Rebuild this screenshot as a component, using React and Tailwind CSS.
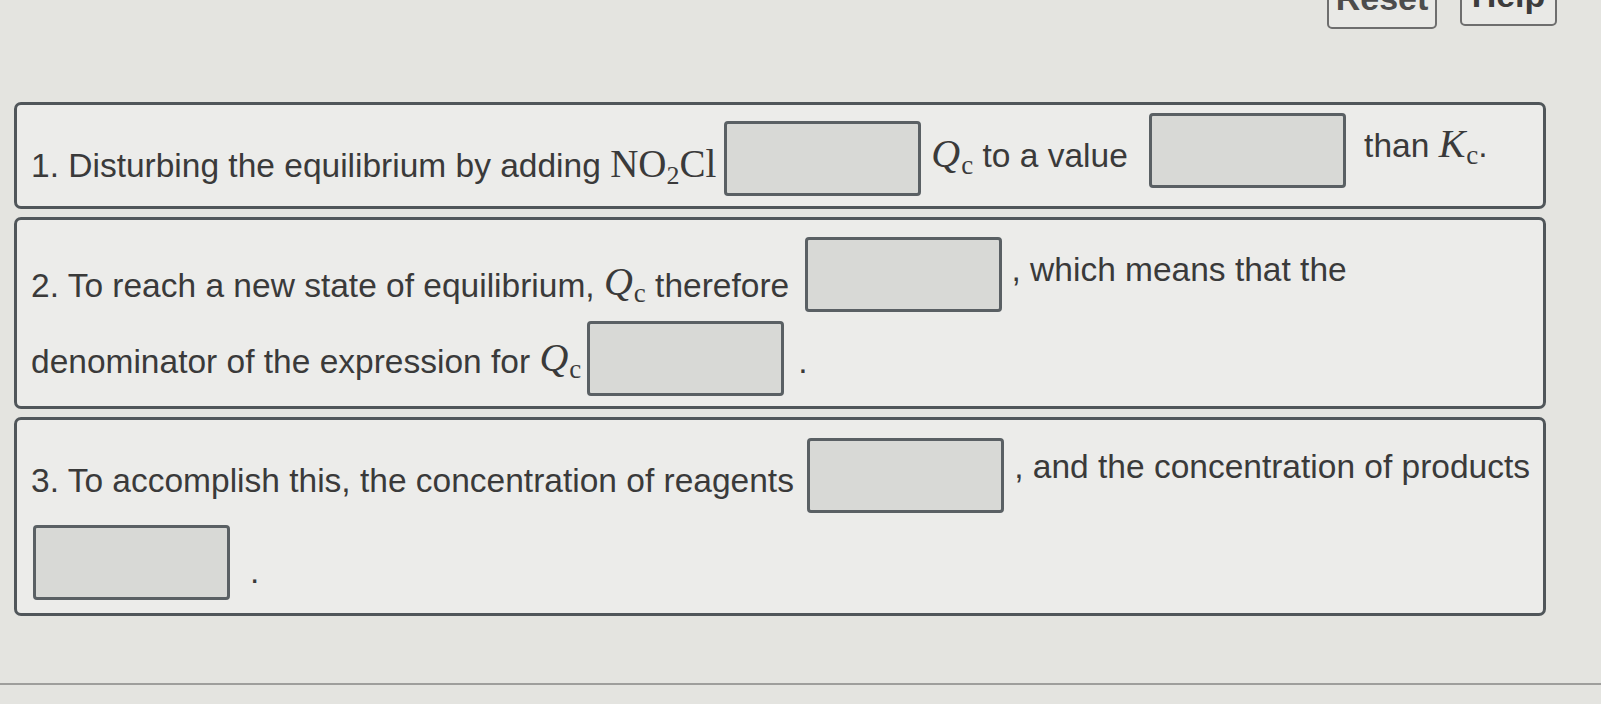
import React from 'react';

const Box = ({ className = '' }) => (
  <span className={`inline-block h-[75px] w-[197px] shrink-0 rounded-[4px] border-[3px] border-[#5a6064] bg-[#d8d9d6] ${className}`} />
);

const Q = () => (
  <span className="font-['Liberation_Serif'] text-[40px] leading-none text-[#3a3a3a]">
    <i>Q</i>
    <sub className="ml-[1px] text-[27px] not-italic">c</sub>
  </span>
);

const K = () => (
  <span className="font-['Liberation_Serif'] text-[40px] leading-none text-[#3a3a3a]">
    <i>K</i>
    <sub className="ml-[1px] text-[27px]">c</sub>
  </span>
);

const Card = ({ children, className = '' }) => (
  <div className={`w-[1532px] rounded-[7px] border-[3px] border-[#50565a] bg-[#ececea] px-[14px] ${className}`}>
    {children}
  </div>
);

export default function App() {
  return (
    <div className="h-[704px] w-[1601px] overflow-hidden bg-[#e4e4e0] font-['Liberation_Sans',Arial,sans-serif] text-[33.5px] text-[#3a3a3a]">
      {/* top toolbar, cut off by the top of the photo */}
      <div className="flex h-[29px] items-end justify-end gap-[23px] overflow-hidden pr-[44px]">
        <button className="flex h-[54px] w-[110px] shrink-0 items-start justify-center rounded-[5px] border-2 border-[#6e6e6e] bg-[#e9e9e6] pt-[4px] text-[34px] font-bold leading-none text-[#4c4c4c]">
          Reset
        </button>
        <button className="mb-[3px] flex h-[54px] w-[97px] shrink-0 items-start justify-center rounded-[5px] border-2 border-[#6e6e6e] bg-[#e9e9e6] pt-[4px] text-[34px] font-bold leading-none text-[#3c3c3c]">
          Help
        </button>
      </div>

      <div className="flex flex-col gap-[8px] pl-[14px] pt-[73px]">
        <Card className="pt-[14px] pb-[12px]">
          <div className="flex items-center whitespace-pre">
            <span className="translate-y-[10px]">1. Disturbing the equilibrium by adding </span>
            <span className="translate-y-[8px] font-['Liberation_Serif'] text-[39px]">
              NO<sub className="text-[26px]">2</sub>Cl
            </span>
            <Box className="ml-[8px] translate-y-[2px]" />
            <span className="ml-[10px]"><Q /></span>
            <span> to a value </span>
            <Box className="ml-[12px] -translate-y-[6px]" />
            <span className="ml-[18px] -translate-y-[10px]">than </span>
            <span className="-translate-y-[10px]"><K /></span>
            <span className="-translate-y-[10px]">.</span>
          </div>
        </Card>

        <Card className="pt-[17px] pb-[10px]">
          <div className="flex flex-col gap-[9px]">
            <div className="flex items-center whitespace-pre">
              <span className="translate-y-[12px]">2. To reach a new state of equilibrium, </span>
              <span className="translate-y-[10px]"><Q /></span>
              <span className="translate-y-[12px]"> therefore </span>
              <Box className="ml-[6px]" />
              <span className="ml-[10px] -translate-y-[4px]">, which means that the</span>
            </div>
            <div className="flex items-center whitespace-pre">
              <span className="translate-y-[4px]">denominator of the expression for </span>
              <span className="translate-y-[2px]"><Q /></span>
              <Box className="ml-[6px]" />
              <span className="ml-[14px] translate-y-[4px]">.</span>
            </div>
          </div>
        </Card>

        <Card className="pt-[18px] pb-[13px]">
          <div className="flex flex-col gap-[12px]">
            <div className="flex items-center whitespace-pre">
              <span className="translate-y-[6px]">3. To accomplish this, the concentration of reagents </span>
              <Box className="ml-[4px]" />
              <span className="ml-[10px] -translate-y-[8px]">, and the concentration of products</span>
            </div>
            <div className="flex items-center whitespace-pre">
              <Box className="ml-[2px]" />
              <span className="ml-[20px] translate-y-[10px]">.</span>
            </div>
          </div>
        </Card>
      </div>

      <div className="mt-[67px] h-[2px] w-full bg-[#9e9e9c]" />
    </div>
  );
}
